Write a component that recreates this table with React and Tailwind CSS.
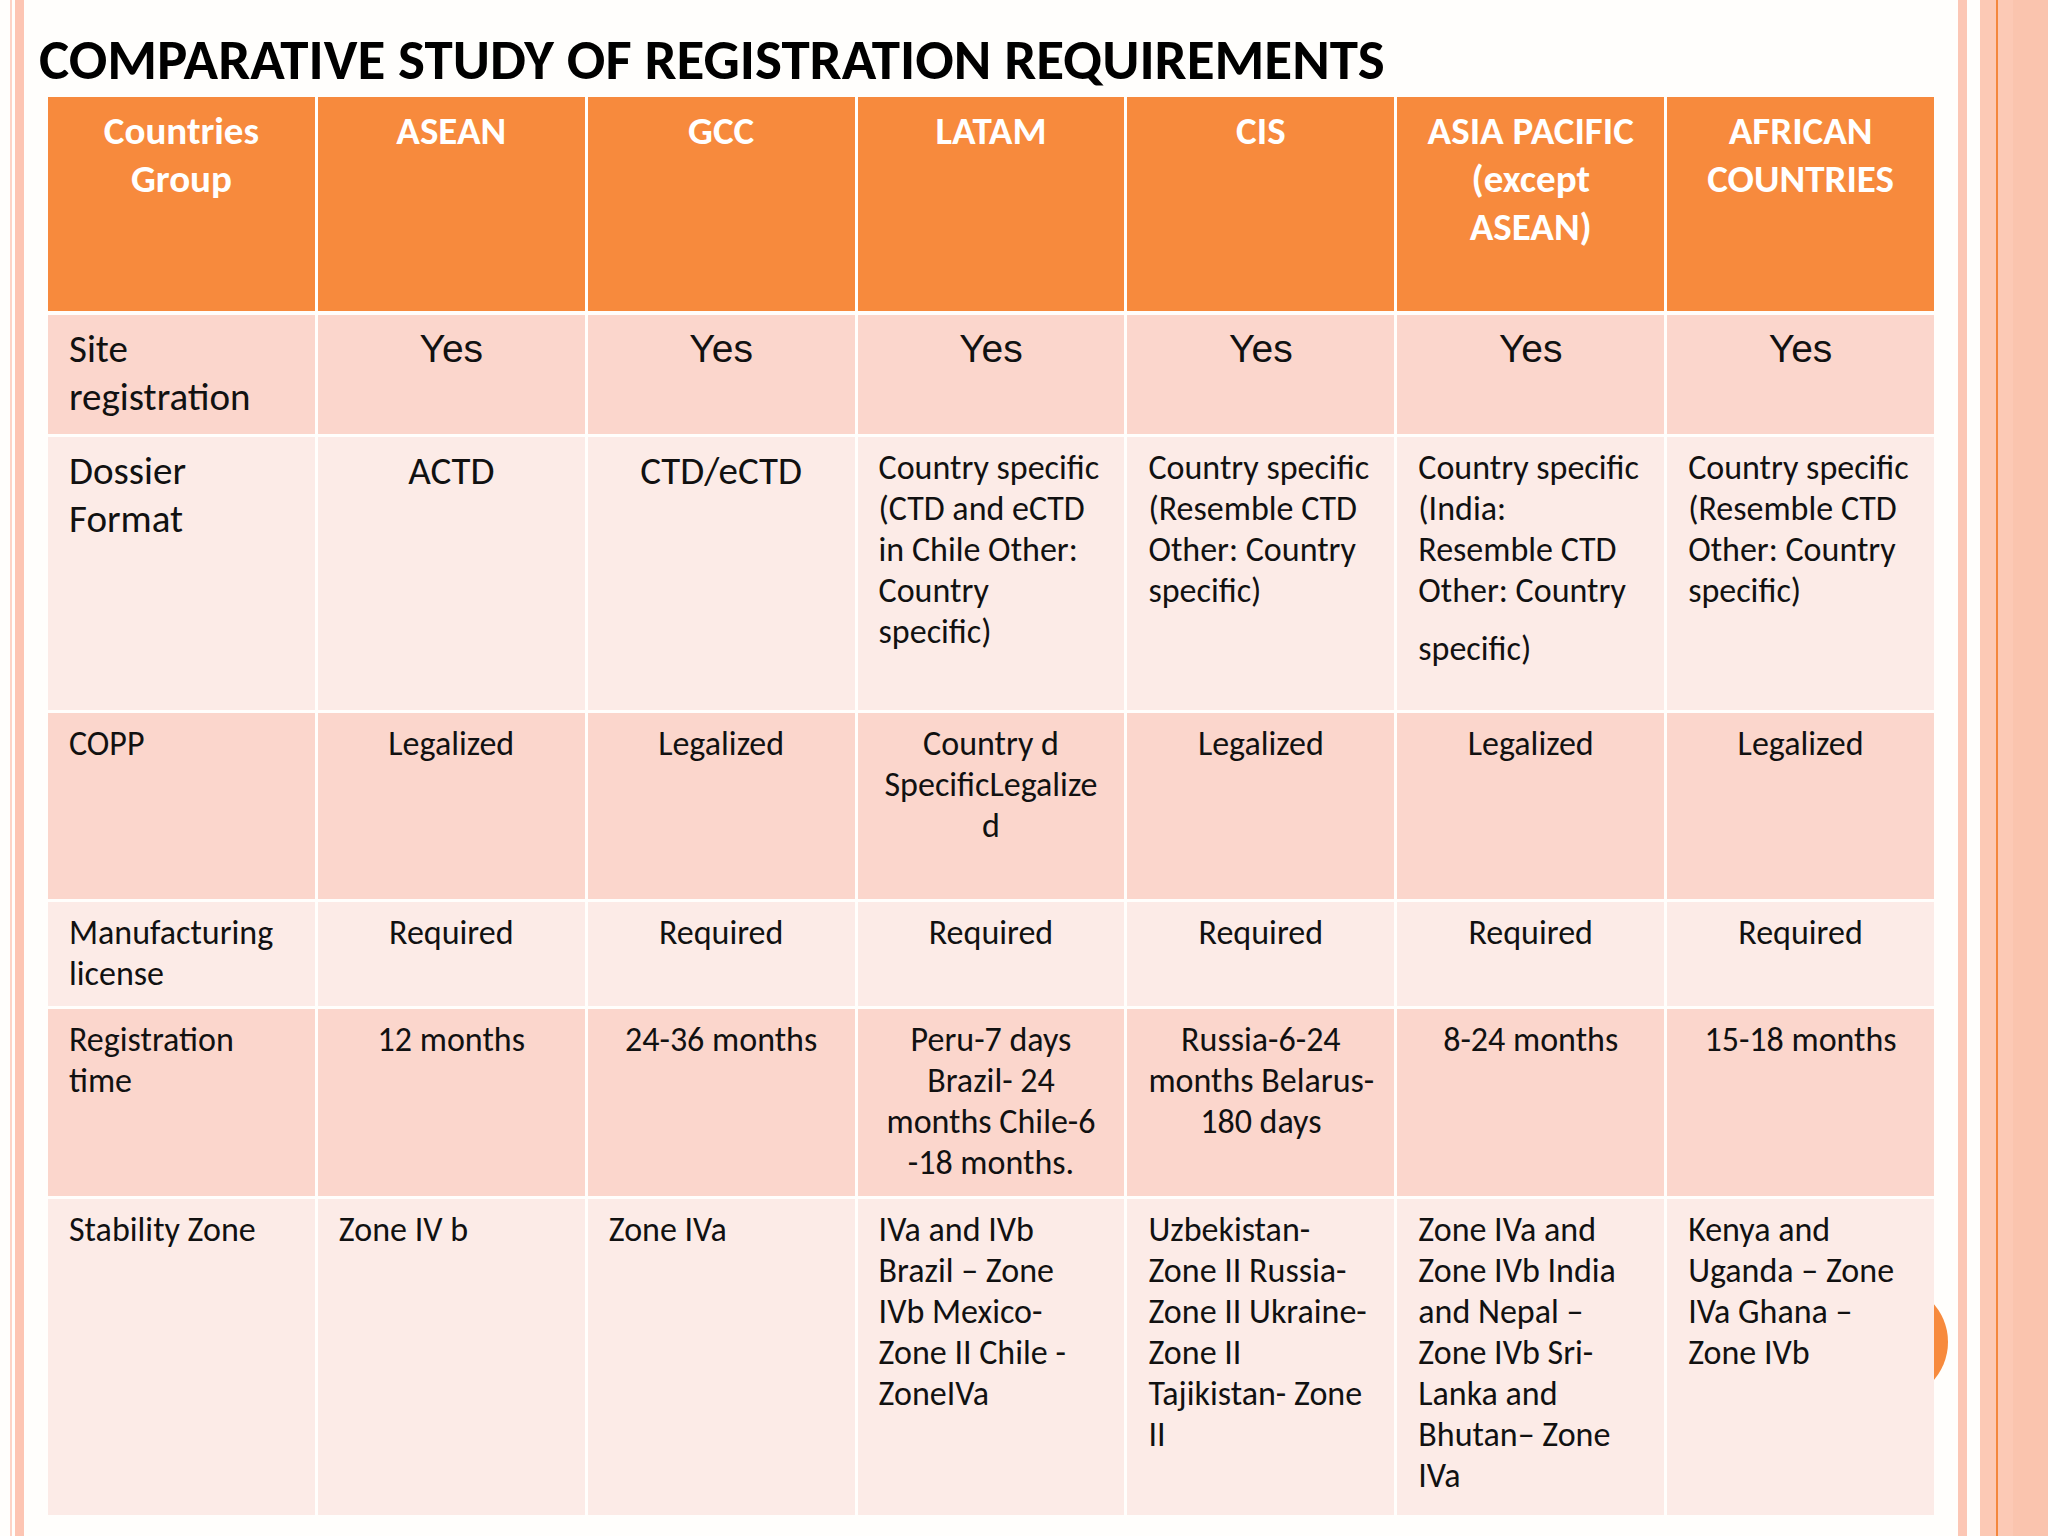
import React from 'react';

const HEAD = "bg-[#F78A3D]";
const DARK = "bg-[#FBD6CC]";
const LIGHT = "bg-[#FCEBE7]";

const header = [
    ["Countries", "Group"],
    ["ASEAN"],
    ["GCC"],
    ["LATAM"],
    ["CIS"],
    ["ASIA PACIFIC", "(except", "ASEAN)"],
    ["AFRICAN", "COUNTRIES"],
];

// each cell: [lines, align, size]
const rows = [
    {
        h: "h-[119px]",
        bg: DARK,
        cells: [
            [["Site", "registration"], "left", "lg"],
            [["Yes"], "center", "arial"],
            [["Yes"], "center", "arial"],
            [["Yes"], "center", "arial"],
            [["Yes"], "center", "arial"],
            [["Yes"], "center", "arial"],
            [["Yes"], "center", "arial"],
        ],
    },
    {
        h: "h-[273px]",
        bg: LIGHT,
        cells: [
            [["Dossier", "Format"], "left", "lg"],
            [["ACTD"], "center", "lg"],
            [["CTD/eCTD"], "center", "lg"],
            [["Country specific", "(CTD and eCTD", "in Chile Other:", "Country", "specific)"], "left", "md"],
            [["Country specific", "(Resemble CTD", "Other: Country", "specific)"], "left", "md"],
            [["Country specific", "(India:", "Resemble CTD", "Other: Country", "", "specific)"], "left", "md"],
            [["Country specific", "(Resemble CTD", "Other: Country", "specific)"], "left", "md"],
        ],
    },
    {
        h: "h-[186px]",
        bg: DARK,
        cells: [
            [["COPP"], "left", "md"],
            [["Legalized"], "center", "md"],
            [["Legalized"], "center", "md"],
            [["Country d", "SpecificLegalize", "d"], "center", "md"],
            [["Legalized"], "center", "md"],
            [["Legalized"], "center", "md"],
            [["Legalized"], "center", "md"],
        ],
    },
    {
        h: "h-[104px]",
        bg: LIGHT,
        cells: [
            [["Manufacturing", "license"], "left", "md"],
            [["Required"], "center", "md"],
            [["Required"], "center", "md"],
            [["Required"], "center", "md"],
            [["Required"], "center", "md"],
            [["Required"], "center", "md"],
            [["Required"], "center", "md"],
        ],
    },
    {
        h: "h-[187px]",
        bg: DARK,
        cells: [
            [["Registration", "time"], "left", "md"],
            [["12 months"], "center", "md"],
            [["24-36 months"], "center", "md"],
            [["Peru-7 days", "Brazil- 24", "months Chile-6", "-18 months."], "center", "md"],
            [["Russia-6-24", "months Belarus-", "180 days"], "center", "md"],
            [["8-24 months"], "center", "md"],
            [["15-18 months"], "center", "md"],
        ],
    },
    {
        h: "h-[316px]",
        bg: LIGHT,
        cells: [
            [["Stability Zone"], "left", "md"],
            [["Zone IV b"], "left", "md"],
            [["Zone IVa"], "left", "md"],
            [["IVa and IVb", "Brazil – Zone", "IVb Mexico-", "Zone II Chile -", "ZoneIVa"], "left", "md"],
            [["Uzbekistan-", "Zone II Russia-", "Zone II Ukraine-", "Zone II", "Tajikistan- Zone", "II"], "left", "md"],
            [["Zone IVa and", "Zone IVb India", "and Nepal –", "Zone IVb Sri-", "Lanka and", "Bhutan– Zone", "IVa"], "left", "md"],
            [["Kenya and", "Uganda – Zone", "IVa Ghana –", "Zone IVb"], "left", "md"],
        ],
    },
];

const sizeClass = {
    lg: "text-[39px] leading-[48px] font-['Carlito','Calibri','Lato',sans-serif]",
    md: "text-[34px] leading-[41px] font-['Carlito','Calibri','Lato',sans-serif]",
    arial: "text-[39px] leading-[48px] font-['Liberation_Sans','Arial',sans-serif]",
};

const Cell = ({ lines, align, size, bg }) => (
    <div
        className={`${bg} px-[21px] pt-[10px] text-[#111] ${sizeClass[size]} ${
            align === 'center' ? 'text-center' : 'text-left'
        }`}
    >
        {lines.map((line, i) =>
            line === "" ? (
                <div key={i} className="h-[17px]" />
            ) : (
                <div key={i} className="whitespace-nowrap">
                    {line}
                </div>
            )
        )}
    </div>
);

const App = () => {
    return (
        <div className="relative flex w-[2048px] h-[1536px] overflow-hidden bg-[#FFFEFC]">
            {/* left edge stripes */}
            <div className="w-[10px] shrink-0" />
            <div className="w-[2px] shrink-0 bg-[#FDD3C6]" />
            <div className="w-[3px] shrink-0" />
            <div className="w-[9px] shrink-0 bg-[#FDC5B3]" />

            {/* slide body */}
            <div className="relative w-[1934px] shrink-0 pl-[15px] pt-[31px]">
                {/* orange circle peeking out behind the table */}
                <div className="absolute left-[1808px] top-[1284px] h-[116px] w-[116px] rounded-full bg-[#F78A3D]" />

                <h1 className="relative text-[57px] leading-[57px] font-bold text-black whitespace-nowrap font-['Carlito','Calibri','Lato',sans-serif]">
                    COMPARATIVE STUDY OF REGISTRATION REQUIREMENTS
                </h1>

                <div className="relative ml-[9px] mt-[9px] w-[1886px] flex flex-col gap-[3px]">
                    {/* header row */}
                    <div className="grid grid-cols-7 gap-[3px] h-[214px] mb-[1px]">
                        {header.map((lines, i) => (
                            <div
                                key={i}
                                className={`${HEAD} pt-[10px] text-center text-white font-bold text-[39px] leading-[48px] font-['Carlito','Calibri','Lato',sans-serif]`}
                            >
                                {lines.map((l, j) => (
                                    <div key={j} className="whitespace-nowrap">{l}</div>
                                ))}
                            </div>
                        ))}
                    </div>

                    {rows.map((row, r) => (
                        <div key={r} className={`grid grid-cols-7 gap-[3px] ${row.h}`}>
                            {row.cells.map(([lines, align, size], c) => (
                                <Cell key={c} lines={lines} align={align} size={size} bg={row.bg} />
                            ))}
                        </div>
                    ))}
                </div>
            </div>

            {/* right edge stripes */}
            <div className="w-[9px] shrink-0 bg-[#FCC7B5]" />
            <div className="w-[13px] shrink-0" />
            <div className="w-[16px] shrink-0 bg-[#FCC9B5]" />
            <div className="w-[2px] shrink-0 bg-[#F4873D]" />
            <div className="w-[15px] shrink-0 bg-[#FCC9B5]" />
            <div className="w-[35px] shrink-0 bg-[#FAC4AE]" />
        </div>
    );
};

export default App;
